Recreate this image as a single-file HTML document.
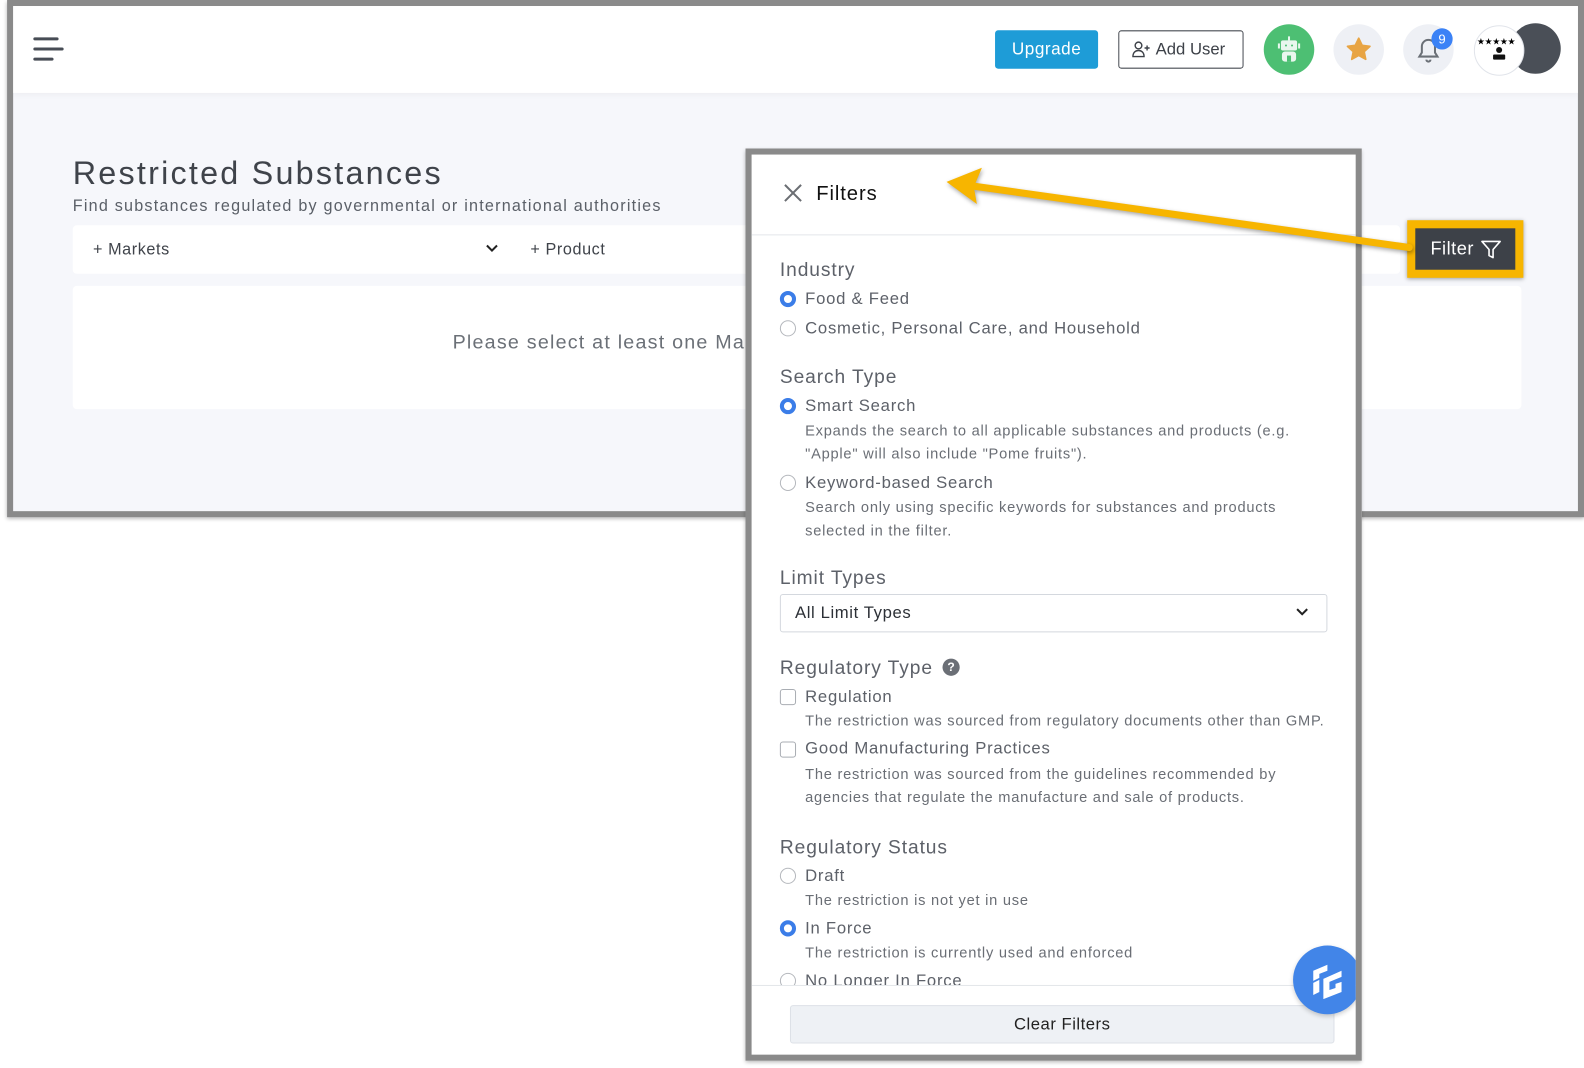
<!DOCTYPE html>
<html><head><meta charset="utf-8"><style>
*{margin:0;padding:0;box-sizing:border-box}
html,body{width:1584px;height:1068px;overflow:hidden;background:#fff}
body{font-family:"Liberation Sans",sans-serif}
#w{position:absolute;left:0;top:0;width:1568px;height:1057px;transform:scale(1.0102);transform-origin:0 0}
.a{position:absolute;white-space:nowrap}
.t{line-height:24px}
#frame{left:7px;top:0;width:1561px;height:512px;border:6px solid #8a8a8a;background:#f6f7fb;box-shadow:0 2px 4px rgba(0,0,0,.3);overflow:hidden}
#hdr{left:0;top:0;width:100%;height:86px;background:#fff;box-shadow:0 2px 6px rgba(0,0,0,.04)}
.lbl{font-size:19px;color:#5d6169;letter-spacing:.9px;margin-top:2px}
.opt{font-size:16.5px;color:#5d6169;letter-spacing:.75px;margin-top:1px}
.dsc{font-size:14.5px;color:#6a6e75;letter-spacing:.75px;margin-top:1px}
.rad{position:absolute;width:16px;height:16px;border-radius:50%;border:1px solid #b5b8bd;background:#fff}
.rad.on{border:4.5px solid #3b7de8}
.chk{position:absolute;width:16px;height:16px;border-radius:3px;border:1px solid #a9adb3;background:#fff}
</style></head><body><div id="w">

<div id="frame" class="a">
 <div id="hdr" class="a"></div>
</div>
<div class="a" style="left:33px;top:37px;width:25px;height:3px;background:#474c55;border-radius:2px"></div>
<div class="a" style="left:33px;top:47px;width:30px;height:3px;background:#474c55;border-radius:2px"></div>
<div class="a" style="left:33px;top:57px;width:20px;height:3px;background:#474c55;border-radius:2px"></div>

<div class="a" style="left:985px;top:30px;width:102px;height:38px;background:#1e9cd7;border-radius:3px;color:#fff;font-size:17px;text-align:center;line-height:38px;letter-spacing:.5px">Upgrade</div>
<div class="a" style="left:1107px;top:30px;width:124px;height:38px;border:1px solid #474b52;border-radius:3px;color:#3d4148;font-size:16.5px;line-height:36px;padding-left:36px">Add User</div>
<svg class="a" style="left:1120px;top:40px" width="20" height="18" viewBox="0 0 20 18" fill="none" stroke="#3d4148" stroke-width="1.4"><circle cx="7" cy="5" r="3.3"/><path d="M1.5 16c0-4 2.5-6 5.5-6s5.5 2 5.5 6z"/><path d="M15.5 5v5M13 7.5h5"/></svg>

<div class="a" style="left:1251px;top:24px;width:50px;height:50px;border-radius:50%;background:#4dbf73"></div>
<svg class="a" style="left:1262px;top:35px" width="28" height="28" viewBox="0 0 28 28" fill="#e9f7ee"><rect x="13" y="1" width="2" height="4"/><rect x="6" y="5" width="16" height="10" rx="2"/><rect x="3" y="8" width="2" height="5"/><rect x="23" y="8" width="2" height="5"/><rect x="7" y="16" width="14" height="10" rx="3"/><rect x="12" y="20" width="4" height="6" fill="#4dbf73"/><circle cx="11" cy="10" r="1" fill="#4dbf73"/><circle cx="17" cy="10" r="1" fill="#4dbf73"/></svg>
<div class="a" style="left:1320px;top:24px;width:50px;height:50px;border-radius:50%;background:#eef0f5"></div>
<svg class="a" style="left:1331px;top:35px" width="28" height="28" viewBox="0 0 24 24"><path d="M12 2.5l2.9 6 6.6.8-4.9 4.5 1.3 6.5L12 17l-5.9 3.3 1.3-6.5L2.5 9.3l6.6-.8z" fill="#e8a443" stroke="#e8a443" stroke-linejoin="round" stroke-width="1.5"/></svg>
<div class="a" style="left:1389px;top:24px;width:50px;height:50px;border-radius:50%;background:#eef0f5"></div>
<svg class="a" style="left:1400px;top:34px" width="28" height="30" viewBox="0 0 28 30" fill="none" stroke="#6b7077" stroke-width="2"><path d="M5 22h18l-2.5-4v-6a6.5 6.5 0 0 0-13 0v6z"/><path d="M12 25a2 2 0 0 0 4 0"/></svg>
<div class="a" style="left:1417px;top:28px;width:21px;height:21px;border-radius:50%;background:#3b82f6;color:#fff;font-size:13px;text-align:center;line-height:21px">9</div>
<div class="a" style="left:1495px;top:23px;width:50px;height:50px;border-radius:50%;background:#4a4f57"></div>
<div class="a" style="left:1459px;top:25px;width:50px;height:50px;border-radius:50%;background:#fff;border:1px solid #e1e4ea"></div>
<div class="a" style="left:1462px;top:36px;font-size:9px;color:#000;letter-spacing:-.5px">★★★★★</div>
<svg class="a" style="left:1477px;top:46px" width="14" height="14" viewBox="0 0 14 14" fill="#111"><circle cx="7" cy="3.5" r="3"/><rect x="1" y="8" width="12" height="5" rx="1"/></svg>

<div class="a" style="left:72px;top:153px;font-size:32px;color:#3f434a;letter-spacing:2.2px">Restricted Substances</div>
<div class="a" style="left:72px;top:196px;font-size:16px;color:#5b6068;letter-spacing:1.2px">Find substances regulated by governmental or international authorities</div>
<div class="a" style="left:72px;top:223px;width:1314px;height:48px;background:#fff;border-radius:4px"></div>
<div class="a t" style="left:92px;top:236px;font-size:16px;color:#3f434a;letter-spacing:.6px">+ Markets</div>
<svg class="a" style="left:480px;top:240px" width="14" height="12" viewBox="0 0 14 12" fill="none" stroke="#222" stroke-width="2"><path d="M2 3l5 5 5-5"/></svg>
<div class="a t" style="left:525px;top:236px;font-size:16px;color:#3f434a;letter-spacing:.6px">+ Product</div>
<div class="a" style="left:72px;top:283px;width:1434px;height:122px;background:#fff;border-radius:4px"></div>
<div class="a" style="left:448px;top:328px;font-size:19.5px;color:#6b7077;letter-spacing:1.2px">Please select at least one Markets</div>

<div class="a" style="left:1393px;top:218px;width:115px;height:57px;background:#f7b500;box-shadow:0 1px 4px rgba(0,0,0,.35)"></div>
<div class="a" style="left:1401px;top:226px;width:99px;height:41px;background:#3d4148"></div>
<div class="a" style="left:1416px;top:234px;font-size:18px;color:#fff;line-height:24px;letter-spacing:.5px">Filter</div>
<svg class="a" style="left:1465px;top:236px" width="22" height="22" viewBox="0 0 22 22" fill="none" stroke="#fff" stroke-width="1.6" stroke-linejoin="round"><path d="M2 3h18l-7 8v8l-4-2v-6z"/></svg>

<div class="a" style="left:738px;top:147px;width:610px;height:903px;border:6px solid #8a8a8a;background:#fff;box-shadow:0 2px 4px rgba(0,0,0,.3);overflow:hidden">
 <div class="a" style="left:0;top:79px;width:100%;height:1px;background:#e3e6ea"></div>
 <div class="a" style="left:0;top:822px;width:100%;height:1px;background:#e3e6ea"></div>
 <div class="a" style="left:38px;top:842px;width:539px;height:38px;background:#eef1f5;border:1px solid #dde1e7;border-radius:3px;text-align:center;line-height:36px;font-size:16.5px;color:#222;letter-spacing:.5px">Clear Filters</div>
 <div class="a" style="left:536px;top:783px;width:68px;height:68px;border-radius:50%;background:#4285e8;box-shadow:0 2px 5px rgba(0,0,0,.2)"></div>
 <svg class="a" style="left:552px;top:800px" width="40" height="36" viewBox="0 0 40 36" fill="#fff"><path d="M4 8l14-6v6L10 11v4l-6 3z"/><path d="M4 20l6-3v12l-6 3z"/><path d="M14 16l18-8v6l-12 5v8l6-2v-4l6-2v10l-18 7z"/></svg>
</div>
<svg class="a" style="left:775px;top:181px" width="20" height="20" viewBox="0 0 20 20" stroke="#6b6e73" stroke-width="2"><path d="M2 2l16 16M18 2L2 18"/></svg>
<div class="a" style="left:808px;top:181px;font-size:20px;color:#111;letter-spacing:.9px">Filters</div>

<div class="a t lbl" style="left:772px;top:254px">Industry</div>
<div class="rad on" style="left:772px;top:288px"></div><div class="a t opt" style="left:797px;top:283px">Food &amp; Feed</div>
<div class="rad" style="left:772px;top:317px"></div><div class="a t opt" style="left:797px;top:312px">Cosmetic, Personal Care, and Household</div>

<div class="a t lbl" style="left:772px;top:360px">Search Type</div>
<div class="rad on" style="left:772px;top:394px"></div><div class="a t opt" style="left:797px;top:389px">Smart Search</div>
<div class="a t dsc" style="left:797px;top:414px">Expands the search to all applicable substances and products (e.g.</div>
<div class="a t dsc" style="left:797px;top:437px">"Apple" will also include "Pome fruits").</div>
<div class="rad" style="left:772px;top:470px"></div><div class="a t opt" style="left:797px;top:465px">Keyword-based Search</div>
<div class="a t dsc" style="left:797px;top:490px">Search only using specific keywords for substances and products</div>
<div class="a t dsc" style="left:797px;top:513px">selected in the filter.</div>

<div class="a t lbl" style="left:772px;top:559px">Limit Types</div>
<div class="a" style="left:772px;top:588px;width:542px;height:38px;border:1px solid #d4d8de;border-radius:3px"></div>
<div class="a t" style="left:787px;top:595px;font-size:16.5px;color:#2c3036;letter-spacing:.6px">All Limit Types</div>
<svg class="a" style="left:1282px;top:600px" width="14" height="12" viewBox="0 0 14 12" fill="none" stroke="#222" stroke-width="2"><path d="M2 3l5 5 5-5"/></svg>

<div class="a t lbl" style="left:772px;top:648px">Regulatory Type</div>
<div class="a" style="left:933px;top:652px;width:17px;height:17px;border-radius:50%;background:#6b6f76;color:#fff;font-size:12px;font-weight:bold;text-align:center;line-height:17px">?</div>
<div class="chk" style="left:772px;top:682px"></div><div class="a t opt" style="left:797px;top:677px">Regulation</div>
<div class="a t dsc" style="left:797px;top:701px">The restriction was sourced from regulatory documents other than GMP.</div>
<div class="chk" style="left:772px;top:734px"></div><div class="a t opt" style="left:797px;top:728px">Good Manufacturing Practices</div>
<div class="a t dsc" style="left:797px;top:754px">The restriction was sourced from the guidelines recommended by</div>
<div class="a t dsc" style="left:797px;top:777px">agencies that regulate the manufacture and sale of products.</div>

<div class="a t lbl" style="left:772px;top:826px">Regulatory Status</div>
<div class="rad" style="left:772px;top:859px"></div><div class="a t opt" style="left:797px;top:854px">Draft</div>
<div class="a t dsc" style="left:797px;top:879px">The restriction is not yet in use</div>
<div class="rad on" style="left:772px;top:911px"></div><div class="a t opt" style="left:797px;top:906px">In Force</div>
<div class="a t dsc" style="left:797px;top:931px">The restriction is currently used and enforced</div>
<div class="a" style="left:744px;top:962px;width:550px;height:13px;overflow:hidden">
 <div class="rad" style="left:28px;top:1px"></div><div class="a t opt" style="left:53px;top:-4px">No Longer In Force</div>
</div>

<svg class="a" style="left:0;top:0;filter:drop-shadow(1px 2px 2px rgba(0,0,0,.35))" width="1568" height="1057"><path d="M1395 245L962 184" stroke="#f7b500" stroke-width="7" stroke-linecap="round"/><path d="M937 180L972 166L964 185L967 202z" fill="#f7b500"/></svg>
</div></body></html>
